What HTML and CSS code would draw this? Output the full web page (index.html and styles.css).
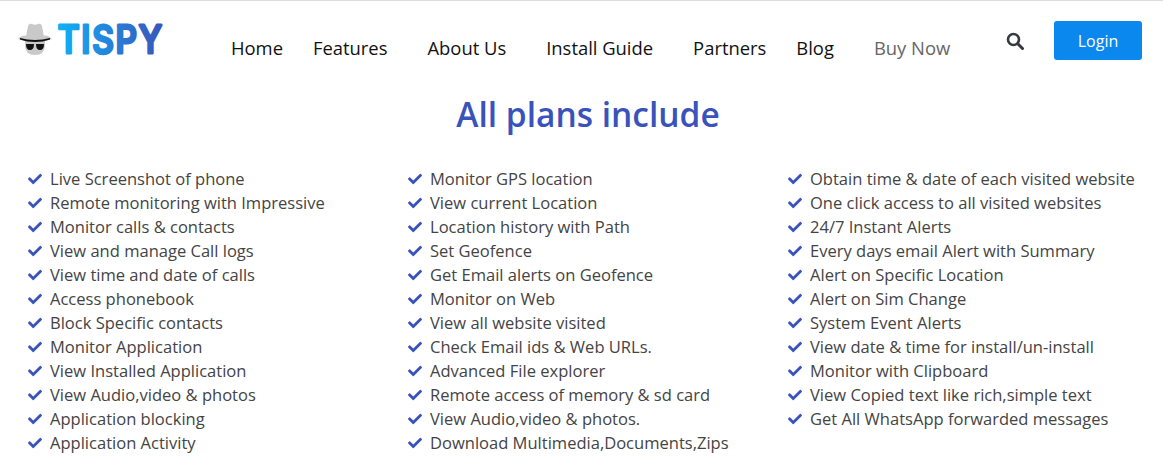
FILE: index.html
```html
<!DOCTYPE html>
<html lang="en">
<head>
  <meta charset="UTF-8">
  <title>Tispy - All plans include</title>
  <link rel="stylesheet" href="styles.css">
</head>
<body>
  <header class="site-header">
    <a class="logo" href="#">
      <svg class="logo-icon" viewBox="0 0 36 34" width="36" height="34">
        <path d="M9 15 L11 4 Q12 1 15 2 Q18 3.500 21 2 Q24 1 25 4 L27 15 Z" fill="#c9c9c9"/>
        <path d="M8 19 H28 V23 Q28 33 18 33 Q8 33 8 23 Z" fill="#c9c9c9"/>
        <path d="M1 17 Q4 13 9 13.500 Q18 16 27 13.500 Q32 13 35 17 Q30 19.500 18 19.500 Q6 19.500 1 17 Z" fill="#c9c9c9"/>
        <path d="M3 16 Q10 18 18 18 Q26 18 33 16 L33 17.500 Q26 20 18 20 Q10 20 3 17.500 Z" fill="#111"/>
        <path d="M9 22 H17 Q17 28 13 28 Q9 28 9 22 Z M19 22 H27 Q27 28 23 28 Q19 28 19 22 Z" fill="#111"/>
      </svg>
      <svg class="logo-word" viewBox="0 0 110 36" width="110" height="36">
        <defs>
          <linearGradient id="logoGrad" gradientUnits="userSpaceOnUse" x1="0" y1="0" x2="122" y2="0">
            <stop offset="0" stop-color="#0fb2f8"/>
            <stop offset="1" stop-color="#3a55bb"/>
          </linearGradient>
        </defs>
        <text x="2" y="32" transform="scale(.88 1)">TISPY</text>
      </svg>
    </a>
    <nav class="main-nav">
      <a href="#">Home</a>
      <a class="wide" href="#">Features</a>
      <a class="wide" href="#">About Us</a>
      <a class="wide" href="#">Install Guide</a>
      <a href="#">Partners</a>
      <a class="wide" href="#">Blog</a>
      <a class="muted" href="#">Buy Now</a>
    </nav>
    <a class="search-btn" href="#" aria-label="Search">
      <svg viewBox="0 0 18 18" width="18" height="18">
        <circle cx="7.500" cy="7.500" r="5.500" fill="none" stroke="#343a40" stroke-width="2.600"/>
        <path d="M11.800 11.800 L16.500 16.500" stroke="#343a40" stroke-width="3" stroke-linecap="round"/>
      </svg>
    </a>
    <button class="login-btn">Login</button>
  </header>

  <h1 class="plans-title">All plans include</h1>

  <div class="plans-grid">
    <ul class="plan-list">
      <li>Live Screenshot of phone</li>
      <li>Remote monitoring with Impressive</li>
      <li>Monitor calls &amp; contacts</li>
      <li>View and manage Call logs</li>
      <li>View time and date of calls</li>
      <li>Access phonebook</li>
      <li>Block Specific contacts</li>
      <li>Monitor Application</li>
      <li>View Installed Application</li>
      <li>View Audio,video &amp; photos</li>
      <li>Application blocking</li>
      <li>Application Activity</li>
    </ul>
    <ul class="plan-list">
      <li>Monitor GPS location</li>
      <li>View current Location</li>
      <li>Location history with Path</li>
      <li>Set Geofence</li>
      <li>Get Email alerts on Geofence</li>
      <li>Monitor on Web</li>
      <li>View all website visited</li>
      <li>Check Email ids &amp; Web URLs.</li>
      <li>Advanced File explorer</li>
      <li>Remote access of memory &amp; sd card</li>
      <li>View Audio,video &amp; photos.</li>
      <li>Download Multimedia,Documents,Zips</li>
    </ul>
    <ul class="plan-list">
      <li>Obtain time &amp; date of each visited website</li>
      <li>One click access to all visited websites</li>
      <li>24/7 Instant Alerts</li>
      <li>Every days email Alert with Summary</li>
      <li>Alert on Specific Location</li>
      <li>Alert on Sim Change</li>
      <li>System Event Alerts</li>
      <li>View date &amp; time for install/un-install</li>
      <li>Monitor with Clipboard</li>
      <li>View Copied text like rich,simple text</li>
      <li>Get All WhatsApp forwarded messages</li>
    </ul>
  </div>
</body>
</html>
```

FILE: styles.css
```css
* {
  box-sizing: border-box;
}
body {
  margin: 0;
  height: 464px;
  overflow: hidden;
  background-color: #fff;
  border-top: 1px solid #ddd;
  font-family: "Open Sans", "Noto Sans", sans-serif;
}
.site-header {
  display: flex;
  align-items: flex-start;
  height: 80px;
  padding-right: 21px;
}
.logo {
  display: flex;
  align-items: center;
  flex: none;
  margin: 20px 0 0 17px;
  text-decoration: none;
}
.logo-icon,
.logo-word {
  display: block;
}
.logo-word {
  margin-left: 3px;
  overflow: visible;
}
.logo-word text {
  font-family: "Inter", sans-serif;
  font-size: 38px;
  font-weight: 500;
  letter-spacing: 2px;
  fill: url(#logoGrad);
  stroke: url(#logoGrad);
  stroke-width: 3px;
  stroke-linejoin: round;
}
.main-nav {
  display: flex;
  flex: none;
  margin: 34px 0 0 50px;
}
.main-nav a {
  padding: 0 15px;
  color: #111;
  font-size: 18.400px;
  line-height: 26px;
  text-decoration: none;
  white-space: nowrap;
}
.main-nav a.wide {
  padding-right: 25px;
}
.main-nav a.muted {
  color: #666;
}
.search-btn {
  display: block;
  margin: 31px 0 0 auto;
}
.login-btn {
  flex: none;
  width: 88px;
  height: 39px;
  margin: 20px 0 0 30px;
  background-color: #0a88ee;
  border: 0;
  border-radius: 3px;
  color: #fff;
  font-family: inherit;
  font-size: 16px;
}
.plans-title {
  margin: 11px 0 0;
  padding-left: 13px;
  color: #3a53bb;
  font-size: 33.500px;
  font-weight: 600;
  line-height: 44px;
  text-align: center;
}
.plans-grid {
  display: flex;
  margin: 31px 0 0 28px;
}
.plan-list {
  flex: none;
  width: 380px;
  margin: 0;
  padding: 0;
  list-style: none;
}
.plan-list li {
  position: relative;
  padding-left: 22px;
  color: #444;
  font-size: 16.550px;
  line-height: 24px;
  white-space: nowrap;
}
.plan-list li::before {
  content: "";
  position: absolute;
  left: 0;
  top: 5px;
  width: 14px;
  height: 14px;
  background: url("data:image/svg+xml,%3Csvg xmlns='http://www.w3.org/2000/svg' viewBox='0 0 512 512'%3E%3Cpath fill='%233a53bb' d='M173.898 439.404l-166.4-166.4c-9.997-9.997-9.997-26.206 0-36.204l36.203-36.204c9.997-9.998 26.207-9.998 36.204 0L192 312.69 432.095 72.596c9.997-9.997 26.207-9.997 36.204 0l36.203 36.204c9.997 9.997 9.997 26.206 0 36.204l-294.4 294.401c-9.998 9.997-26.207 9.997-36.204-.001z'/%3E%3C/svg%3E") no-repeat center / contain;
}
```
